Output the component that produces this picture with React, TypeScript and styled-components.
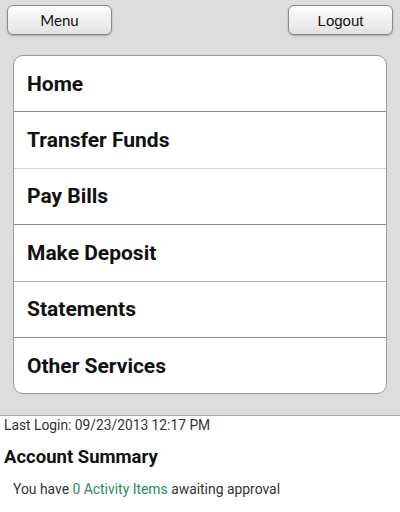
import styled, { createGlobalStyle } from 'styled-components';

const GlobalStyle = createGlobalStyle`
  html, body {
    margin: 0;
    padding: 0;
    background: #ffffff;
    font-family: Roboto, "Liberation Sans", sans-serif;
  }
`;

const Header = styled.div`
  background: #dddddd;
  border-bottom: 1px solid #a8a8a8;
  padding: 5px 7px 21px;
`;

const Toolbar = styled.div`
  display: flex;
  justify-content: space-between;
  margin-bottom: 20px;
`;

const ToolButton = styled.button<{ $font: string }>`
  width: 105px;
  height: 30px;
  border: 1px solid #8a8a8a;
  border-radius: 6px;
  background: linear-gradient(#fefefe, #e2e2e2);
  box-shadow: 0 1px 2px rgba(0, 0, 0, 0.25);
  font-family: ${(p) => p.$font};
  font-size: 15px;
  color: #111;
  padding: 0;
  cursor: pointer;
`;

const MenuList = styled.div`
  margin: 0 6px;
  background: #fff;
  border: 1px solid #9a9a9a;
  border-radius: 10px;
  overflow: hidden;
`;

const MenuItem = styled.div<{ $line: string }>`
  height: 55.4px;
  display: flex;
  align-items: center;
  padding: 0 13px;
  font-family: Roboto, sans-serif;
  font-weight: 700;
  font-size: 21px;
  color: #111;
  border-top: 1px solid ${(p) => p.$line};
  &:first-child {
    border-top: none;
  }
`;

const Info = styled.div`
  padding: 0 4px;
  color: #222;
`;

const LastLogin = styled.div`
  font-size: 13.8px;
  margin-top: 1px;
  color: #333;
`;

const SectionTitle = styled.h2`
  font-size: 18.5px;
  font-weight: 700;
  margin: 13px 0 13px;
  color: #111;
`;

const Summary = styled.div`
  font-size: 13.9px;
  padding-left: 9px;
  color: #333;
`;

const Link = styled.span`
  color: #2a8a5a;
`;

const items: [string, string][] = [
  ['Home', '#999'],
  ['Transfer Funds', '#8a8a8a'],
  ['Pay Bills', '#d4d4d4'],
  ['Make Deposit', '#8a8a8a'],
  ['Statements', '#b0b0b0'],
  ['Other Services', '#8a8a8a'],
];

export default function App() {
  return (
    <>
      <GlobalStyle />
      <Header>
        <Toolbar>
          <ToolButton $font="Lato, sans-serif">Menu</ToolButton>
          <ToolButton $font='"Liberation Sans", Arial, sans-serif'>Logout</ToolButton>
        </Toolbar>
        <MenuList>
          {items.map(([label, line]) => (
            <MenuItem key={label} $line={line}>
              {label}
            </MenuItem>
          ))}
        </MenuList>
      </Header>
      <Info>
        <LastLogin>Last Login: 09/23/2013 12:17 PM</LastLogin>
        <SectionTitle>Account Summary</SectionTitle>
        <Summary>
          You have <Link>0 Activity Items</Link> awaiting approval
        </Summary>
      </Info>
    </>
  );
}
